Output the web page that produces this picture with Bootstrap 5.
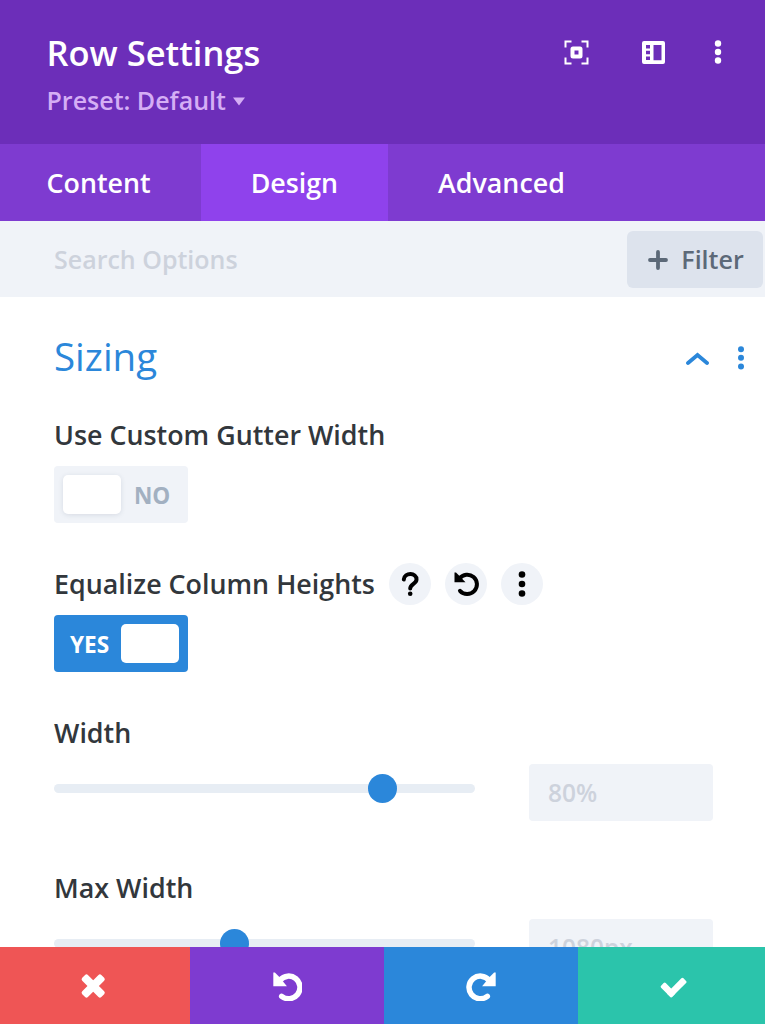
<!DOCTYPE html>
<html lang="en">
<head>
<meta charset="utf-8">
<meta name="viewport" content="width=device-width, initial-scale=1">
<title>Row Settings</title>
<link href="https://cdn.jsdelivr.net/npm/bootstrap@5.3.0/dist/css/bootstrap.min.css" rel="stylesheet">
<style>
body{font-family:"Open Sans","Noto Sans",sans-serif;font-weight:600;line-height:1;color:#32373c;background:#fff}
svg{display:block;flex:none}
.panel{height:1024px}
.head{height:144px;background:#6c2eb9;padding:29px 39px 0 46.500px}
.title{font-size:34.5px;font-weight:600;line-height:48px;color:#fff}
.preset{font-size:25px;line-height:46px;color:#d5aef5;gap:7px}
.preset svg{margin-top:2px}
.tools{height:46px}
.tabs{height:77px;background:#7e3bd0}
.tabs .nav-link{font-size:26.8px;line-height:78px;height:77px;padding:0 50px;color:#fff;border-radius:0}
.tabs .nav-link:first-child{padding-left:46.600px}
.tabs .nav-link.active{background:#8f42ec;color:#fff}
.search{height:76px;background:#f0f3f8;padding:1px 2px 0 54px}
.search .form-control{font:600 25px "Open Sans",sans-serif;padding:0 0 2px;color:#4c5866}
.form-control::placeholder{color:#cdd2dc;opacity:1}
.filter{width:136px;height:57px;background:#dde3ed;border:0;border-radius:6px;color:#5c6978;font-size:25px;font-weight:600;padding:0 0 0 2px;gap:13px}
.section-head{height:117px;padding:3px 20px 0 54px;color:#2b87da}
.section-head h2{font-size:38.5px;font-weight:400;margin:0 0 2px}
.options{padding-left:54px}
.field-name{height:42px;font-size:26.85px;margin-bottom:10px}
.group{margin-bottom:40px}
.group-range{margin-bottom:46px}
.round{width:42px;height:42px;border-radius:50%;background:#f0f3f8;color:#000}
.toggle{width:134px;height:57px;border-radius:4px;background:#f0f3f8;font-size:22.6px;font-weight:700;color:#a2b0c1}
.toggle.on{background:#2b87da;color:#fff}
.knob{width:58px;height:39px;background:#fff;border-radius:5px;box-shadow:0 1px 5px rgba(43,60,90,.13)}
.toggle.on .knob{box-shadow:none}
.track{width:421px;height:9px;border-radius:5px;background:#e7edf4;margin-top:-8px}
.thumb{top:-10px;width:29px;height:29px;border-radius:50%;background:#2b87da}
.range-value{width:184px!important;height:57px;border:0;border-radius:4px;background:#f0f3f8!important;font:600 24.5px "Open Sans",sans-serif;padding:0 19px;margin-left:54px}
.foot{height:77px}
.foot .btn{border-radius:0;border:0;padding:0;color:#fff}
.b1{width:190px;background:#ef5555}.b2{width:193.5px;background:#7e3bd0}.b3{width:194px;background:#2b87da}.b4{width:187.5px;background:#2bc4ab}
</style>
</head>
<body>
<main class="panel d-flex flex-column overflow-hidden">
  <header class="head d-flex justify-content-between flex-shrink-0">
    <div>
      <h1 class="title m-0">Row Settings</h1>
      <div class="preset d-flex align-items-center"><span>Preset: Default</span>
        <svg width="12" height="9" viewBox="0 0 12 9"><path d="M0 .5h12L6 8.500z" fill="currentColor"/></svg></div>
    </div>
    <div class="tools d-flex align-items-center text-white">
      <svg width="25" height="25" viewBox="0 0 25 25"><path d="M1.500 7.500V1.500h6M17.500 1.500h6v6M23.500 17.500v6h-6M7.500 23.500h-6v-6" fill="none" stroke="currentColor" stroke-width="2"/><rect x="8.500" y="8.500" width="8" height="8" rx=".5" fill="none" stroke="currentColor" stroke-width="4" stroke-linejoin="round"/></svg>
      <svg style="margin-left:52px" width="25" height="25" viewBox="0 0 25 25"><path fill="currentColor" fill-rule="evenodd" d="M3 1h19a2 2 0 0 1 2 2v19a2 2 0 0 1-2 2H3a2 2 0 0 1-2-2V3a2 2 0 0 1 2-2zM5 5v3.500h4V5zm0 5.800v3.500h4v-3.500zm0 5.800v3.500h4v-3.500zM12.500 5v15.200h8V5z"/></svg>
      <svg style="margin-left:44px" width="16" height="26" viewBox="0 0 16 26" fill="currentColor"><circle cx="8" cy="4.500" r="3.200"/><circle cx="8" cy="13" r="3.200"/><circle cx="8" cy="21.500" r="3.200"/></svg>
    </div>
  </header>
  <nav class="tabs nav flex-nowrap flex-shrink-0">
    <a class="nav-link" href="#">Content</a><a class="nav-link active" href="#">Design</a><a class="nav-link" href="#">Advanced</a>
  </nav>
  <div class="search d-flex align-items-center flex-shrink-0">
    <input class="form-control border-0 bg-transparent" placeholder="Search Options" aria-label="Search Options">
    <button class="btn filter d-flex align-items-center justify-content-center flex-shrink-0"><svg width="20" height="20" viewBox="0 0 20 20"><path d="M10 2v16M2 10h16" stroke="currentColor" stroke-width="3.800" stroke-linecap="round"/></svg><span>Filter</span></button>
  </div>
  <section class="flex-fill overflow-hidden">
    <div class="section-head d-flex align-items-center justify-content-between">
      <h2>Sizing</h2>
      <div class="d-flex align-items-center">
        <svg width="24" height="16" viewBox="0 0 24 16"><path d="M3 14 12.500 6l9.500 8" fill="none" stroke="currentColor" stroke-width="3.800" stroke-linecap="round"/></svg>
        <svg style="margin-left:26px" width="10" height="26" viewBox="0 0 10 26" fill="currentColor"><circle cx="6" cy="5.200" r="3"/><circle cx="6" cy="13.800" r="3"/><circle cx="6" cy="22.400" r="3"/></svg>
      </div>
    </div>
    <div class="options">
      <div class="group">
        <div class="field-name d-flex align-items-center"><span>Use Custom Gutter Width</span></div>
        <div class="toggle d-flex align-items-center"><span class="knob" style="margin-left:9px"></span><span style="margin-left:13px;padding-top:4px">NO</span></div>
      </div>
      <div class="group">
        <div class="field-name d-flex align-items-center"><span>Equalize Column Heights</span>
          <span class="round" style="margin-left:14px"><svg width="42" height="42" viewBox="0 0 42 42"><path d="M14.800 16.500c.6-7.300 13-7.100 12.700.1-.2 4.300-6.300 4.200-6.300 9" fill="none" stroke="currentColor" stroke-width="4" stroke-linecap="round"/><circle cx="21.200" cy="30.700" r="2.300" fill="currentColor"/></svg></span>
          <span class="round" style="margin-left:14px"><svg width="42" height="42" viewBox="0 0 42 42"><path d="M14.500 15.500A9.700 9.700 0 1 1 15 27.800" fill="none" stroke="currentColor" stroke-width="4" stroke-linecap="round"/><path d="M9.500 9.500h1.500l3.500 3.500 6 6.200H9.500z" fill="currentColor"/></svg></span>
          <span class="round" style="margin-left:14px"><svg width="42" height="42" viewBox="0 0 42 42" fill="currentColor"><circle cx="21" cy="11.500" r="3.300"/><circle cx="21" cy="21" r="3.300"/><circle cx="21" cy="30.500" r="3.300"/></svg></span>
        </div>
        <div class="toggle on d-flex align-items-center"><span style="margin-left:16px;padding-top:4px;width:51px">YES</span><span class="knob"></span></div>
      </div>
      <div class="group-range">
        <div class="field-name d-flex align-items-center"><span>Width</span></div>
        <div class="d-flex align-items-center"><div class="track position-relative"><span class="thumb position-absolute" style="left:314px"></span></div><input class="form-control range-value" placeholder="80%" aria-label="Width"></div>
      </div>
      <div class="group-range">
        <div class="field-name d-flex align-items-center"><span>Max Width</span></div>
        <div class="d-flex align-items-center"><div class="track position-relative"><span class="thumb position-absolute" style="left:166px"></span></div><input class="form-control range-value" placeholder="1080px" aria-label="Max Width"></div>
      </div>
    </div>
  </section>
  <footer class="foot d-flex flex-shrink-0">
    <button class="btn b1 d-flex align-items-center justify-content-center" aria-label="Discard"><svg width="30" height="30" viewBox="0 0 30 30" fill="currentColor"><g transform="translate(13.200 15) rotate(45)"><rect x="-13.500" y="-4" width="27" height="8" rx="2"/><rect x="-4" y="-13.500" width="8" height="27" rx="2"/></g></svg></button>
    <button class="btn b2 d-flex align-items-center justify-content-center" aria-label="Undo"><svg width="30" height="30" viewBox="0 0 30 30"><path d="M8 9.200A11.300 11.300 0 1 1 9.700 25.300" fill="none" stroke="currentColor" stroke-width="5.500" stroke-linecap="round"/><path d="M1.300 1.500h1.600l4 4 8 9.700H1.300z" fill="currentColor"/></svg></button>
    <button class="btn b3 d-flex align-items-center justify-content-center" aria-label="Redo"><svg width="30" height="30" viewBox="0 0 30 30"><path d="M23 9.200A11.300 11.300 0 1 0 21.300 25.300" fill="none" stroke="currentColor" stroke-width="5.500" stroke-linecap="round"/><path d="M29.700 1.500h-1.600l-4 4-8 9.700h13.600z" fill="currentColor"/></svg></button>
    <button class="btn b4 d-flex align-items-center justify-content-center" aria-label="Save"><svg width="32" height="30" viewBox="0 0 32 30" fill="currentColor"><g transform="translate(16.200 22.200) rotate(-45)"><rect x="-3.300" y="-3.300" width="22.500" height="6.600" rx="1.500"/><rect x="-3.300" y="-12.500" width="6.600" height="15.800" rx="1.500"/></g></svg></button>
  </footer>
</main>
<script src="https://cdn.jsdelivr.net/npm/bootstrap@5.3.0/dist/js/bootstrap.bundle.min.js"></script>
</body>
</html>
